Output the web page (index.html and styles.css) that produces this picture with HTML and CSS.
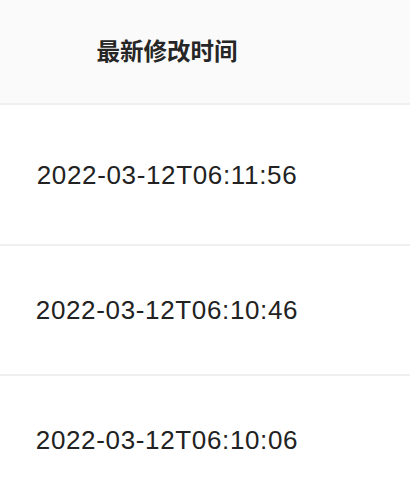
FILE: index.html
```html
<!DOCTYPE html>
<html lang="zh">
<head>
<meta charset="utf-8">
<link rel="stylesheet" href="styles.css">
</head>
<body>
<div class="table">
  <div class="row head"><div class="cell"><span class="title">最新修改时间</span></div></div>
  <div class="row body first"><div class="cell"><span class="date">2022-03-12T06:11:56</span></div></div>
  <div class="row body"><div class="cell"><span class="date">2022-03-12T06:10:46</span></div></div>
  <div class="row body last"><div class="cell"><span class="date">2022-03-12T06:10:06</span></div></div>
</div>
</body>
</html>
```

FILE: styles.css
```css
html, body {
  margin: 0;
  padding: 0;
  background: #ffffff;
}
.table {
  display: flex;
  flex-direction: column;
  width: 410px;
  color: #262626;
}
.row {
  display: flex;
  align-items: center;
  border-bottom: 2px solid #f0f0f0;
}
.cell {
  width: 334px;
  text-align: center;
}
.head {
  height: 103px;
  background: #fafafa;
}
.body { height: 128px; }
.body.first { height: 139px; }
.body.last { border-bottom: none; height: 128px; }
.title {
  font-family: "Noto Sans CJK SC", "Noto Sans", sans-serif;
  font-weight: 700;
  font-size: 23.5px;
  line-height: 1;
}
.date {
  font-family: "Liberation Sans", Arial, sans-serif;
  font-size: 26px;
  letter-spacing: 0.65px;
  line-height: 1;
  color: #222222;
}
```
